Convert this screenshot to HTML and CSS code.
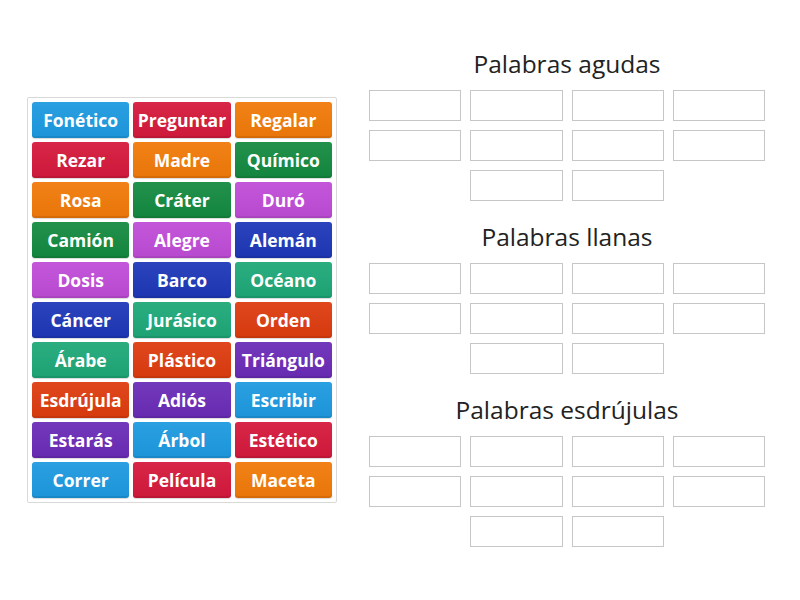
FILE: index.html
```html
<!DOCTYPE html>
<html lang="es">
<head>
<meta charset="utf-8">
<link rel="stylesheet" href="styles.css">
</head>
<body>
<div class="page">
  <div class="bank">
    <div class="tile blue">Fonético</div>
    <div class="tile red">Preguntar</div>
    <div class="tile orange">Regalar</div>
    <div class="tile red">Rezar</div>
    <div class="tile orange">Madre</div>
    <div class="tile green">Químico</div>
    <div class="tile orange">Rosa</div>
    <div class="tile green">Cráter</div>
    <div class="tile magenta">Duró</div>
    <div class="tile green">Camión</div>
    <div class="tile magenta">Alegre</div>
    <div class="tile navy">Alemán</div>
    <div class="tile magenta">Dosis</div>
    <div class="tile navy">Barco</div>
    <div class="tile teal">Océano</div>
    <div class="tile navy">Cáncer</div>
    <div class="tile teal">Jurásico</div>
    <div class="tile vermilion">Orden</div>
    <div class="tile teal">Árabe</div>
    <div class="tile vermilion">Plástico</div>
    <div class="tile purple">Triángulo</div>
    <div class="tile vermilion">Esdrújula</div>
    <div class="tile purple">Adiós</div>
    <div class="tile blue">Escribir</div>
    <div class="tile purple">Estarás</div>
    <div class="tile blue">Árbol</div>
    <div class="tile red">Estético</div>
    <div class="tile blue">Correr</div>
    <div class="tile red">Película</div>
    <div class="tile orange">Maceta</div>
  </div>
  <div class="groups">
    <section class="group">
      <h2 class="group-title">Palabras agudas</h2>
      <div class="slots">
        <div class="slot"></div><div class="slot"></div><div class="slot"></div><div class="slot"></div>
        <div class="slot"></div><div class="slot"></div><div class="slot"></div><div class="slot"></div>
        <div class="slot"></div><div class="slot"></div>
      </div>
    </section>
    <section class="group">
      <h2 class="group-title">Palabras llanas</h2>
      <div class="slots">
        <div class="slot"></div><div class="slot"></div><div class="slot"></div><div class="slot"></div>
        <div class="slot"></div><div class="slot"></div><div class="slot"></div><div class="slot"></div>
        <div class="slot"></div><div class="slot"></div>
      </div>
    </section>
    <section class="group">
      <h2 class="group-title">Palabras esdrújulas</h2>
      <div class="slots">
        <div class="slot"></div><div class="slot"></div><div class="slot"></div><div class="slot"></div>
        <div class="slot"></div><div class="slot"></div><div class="slot"></div><div class="slot"></div>
        <div class="slot"></div><div class="slot"></div>
      </div>
    </section>
  </div>
</div>
</body>
</html>
```
FILE: styles.css
```css
html, body {
  margin: 0;
  padding: 0;
  background: #ffffff;
  font-family: "Open Sans", "Liberation Sans", sans-serif;
}

.page {
  display: flex;
  align-items: flex-start;
  padding-left: 27px;
}

.bank {
  margin-top: 97px;
  width: 300px;
  padding: 4px;
  border: 1px solid #d9d9d9;
  border-radius: 2px;
  display: grid;
  grid-template-columns: repeat(3, 1fr);
  grid-auto-rows: 36px;
  gap: 4px;
}

.tile {
  display: flex;
  align-items: center;
  justify-content: center;
  border-radius: 3px;
  color: #ffffff;
  font-weight: 700;
  font-size: 17.5px;
  white-space: nowrap;
  box-shadow: inset 0 -2px 0 rgba(0, 0, 0, 0.08), 0 1px 1px rgba(0, 0, 0, 0.15);
  background-image: linear-gradient(to bottom, rgba(255, 255, 255, 0.06), rgba(0, 0, 0, 0.04));
}

.blue { background-color: #1d9ae0; }
.red { background-color: #d5193c; }
.orange { background-color: #f17a09; }
.green { background-color: #148a40; }
.magenta { background-color: #bf4cd7; }
.navy { background-color: #1e38b8; }
.teal { background-color: #1ea878; }
.vermilion { background-color: #de3c0f; }
.purple { background-color: #6a2cb7; }

.groups {
  margin-left: 32px;
  margin-top: 49px;
  width: 396px;
  display: flex;
  flex-direction: column;
  gap: 21.5px;
}

.group-title {
  margin: 0 0 11px;
  height: 30px;
  line-height: 30px;
  text-align: center;
  font-weight: 400;
  font-size: 24.5px;
  color: #222222;
}

.slots {
  display: flex;
  flex-wrap: wrap;
  justify-content: center;
  column-gap: 9px;
  row-gap: 9.5px;
}

.slot {
  box-sizing: border-box;
  width: 92.25px;
  height: 30.5px;
  border: 1px solid #c6c6c6;
  background: #ffffff;
}
```
